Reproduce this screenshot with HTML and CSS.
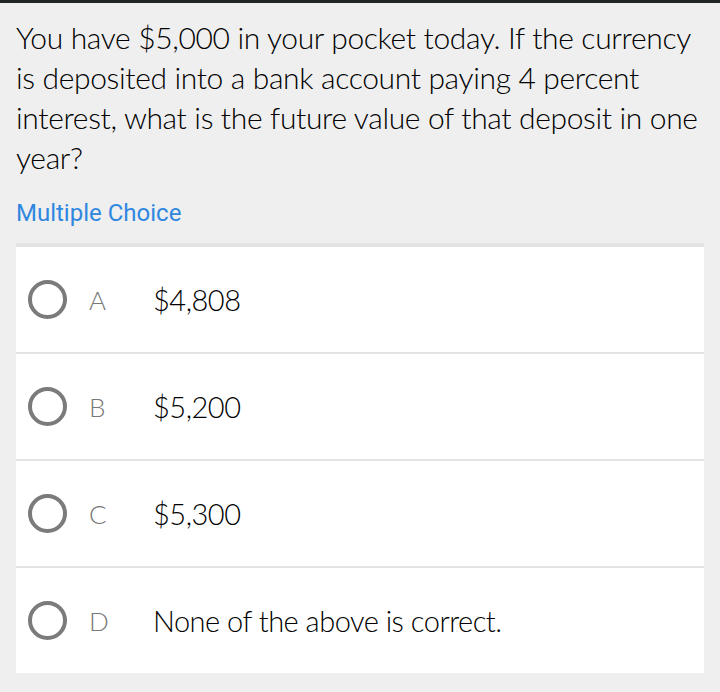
FILE: index.html
```html
<!DOCTYPE html>
<html lang="en">
<head>
    <meta charset="UTF-8">
    <title>question</title>
    <link rel="stylesheet" href="styles.css">
</head>
<body>
    <div class="top-bar"></div>
    <section class="question">
        <p class="prompt">You have $5,000 in your pocket today. If the currency is deposited into a bank account paying 4 percent interest, what is the future value of that deposit in one year?</p>
        <div class="q-type">Multiple Choice</div>
        <ul class="choices">
            <li class="choice">
                <span class="radio"></span>
                <span class="letter">A</span>
                <span class="answer">$4,808</span>
            </li>
            <li class="choice">
                <span class="radio"></span>
                <span class="letter">B</span>
                <span class="answer">$5,200</span>
            </li>
            <li class="choice">
                <span class="radio"></span>
                <span class="letter">C</span>
                <span class="answer">$5,300</span>
            </li>
            <li class="choice">
                <span class="radio"></span>
                <span class="letter">D</span>
                <span class="answer">None of the above is correct.</span>
            </li>
        </ul>
    </section>
</body>
</html>
```

FILE: styles.css
```css
*{
    margin: 0;
    padding: 0;
    box-sizing: border-box;
}
html{
    font-family: Lato, 'Noto Sans', sans-serif;
}
body{
    background: #efefef;
    width: 720px;
    height: 692px;
    overflow: hidden;
}
.top-bar{
    height: 3px;
    background: #1f2827;
}
.question{
    padding: 0 16px;
}
.prompt{
    padding-top: 14px;
    font-size: 30px;
    font-weight: 300;
    line-height: 40px;
    color: #000;
    letter-spacing: -0.35px;
}
.q-type{
    margin-top: 21px;
    font-family: Roboto, sans-serif;
    font-size: 24px;
    line-height: 30px;
    color: #2f87df;
}
.choices{
    list-style: none;
    margin-top: 15px;
    background: #fff;
    border-top: 4px solid #e3e3e3;
}
.choice{
    display: flex;
    align-items: center;
    height: 107px;
    border-bottom: 2px solid #e3e3e3;
}
.choice:last-child{
    height: 105px;
    border-bottom: none;
}
.radio{
    width: 39px;
    height: 39px;
    margin-left: 12px;
    border: 4px solid #7b7b7b;
    border-radius: 50%;
}
.letter{
    width: 86px;
    padding-left: 22px;
    font-size: 26px;
    font-weight: 300;
    color: #777;
}
.answer{
    font-size: 29px;
    font-weight: 300;
    color: #000;
    letter-spacing: -0.5px;
}
```
